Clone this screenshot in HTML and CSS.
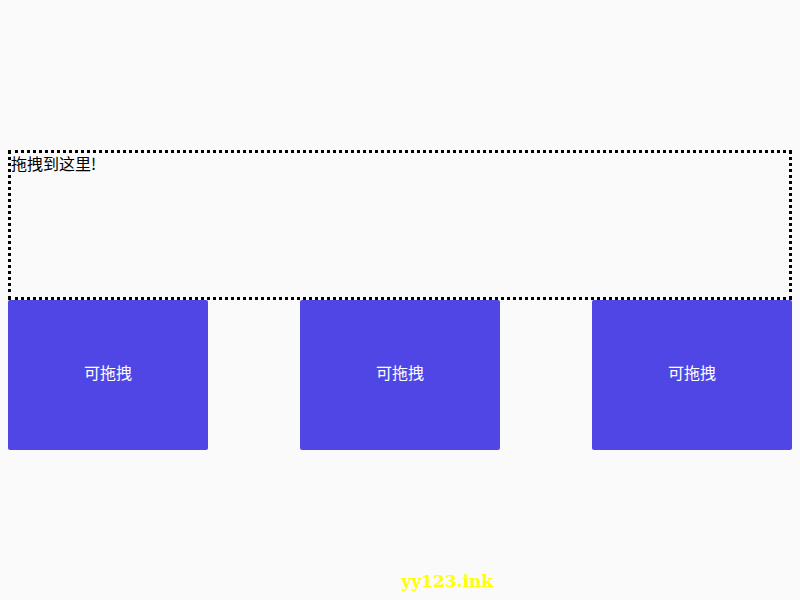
FILE: index.html
```html
<!DOCTYPE html>
<html>
<head>
<meta charset="utf-8">
<link rel="stylesheet" href="styles.css">
</head>
<body>
<div class="page">
  <div class="dropzone">拖拽到这里!</div>
  <div class="items">
    <div class="item">可拖拽</div>
    <div class="item">可拖拽</div>
    <div class="item">可拖拽</div>
  </div>
</div>
<div class="watermark">yy123.ink</div>
</body>
</html>
```

FILE: styles.css
```css
html, body {
  background: #fafafa;
}
body {
  margin: 8px;
  font-family: "Noto Sans CJK SC", "Liberation Sans", sans-serif;
  font-size: 16px;
  color: #000;
}
.page {
  padding-top: 142px;
}
.dropzone {
  height: 144px;
  border: 3px dotted #000;
  line-height: 20px;
}
.items {
  display: flex;
  justify-content: space-between;
}
.item {
  box-sizing: border-box;
  width: 200px;
  height: 150px;
  padding-bottom: 6px;
  background: #4f46e5;
  color: #fff;
  border-radius: 2px;
  display: flex;
  align-items: center;
  justify-content: center;
}
.watermark {
  position: fixed;
  left: 0;
  right: 0;
  bottom: 9px;
  text-align: center;
  padding-left: 94px;
  font-family: "DejaVu Serif", serif;
  font-weight: bold;
  font-size: 17px;
  color: #ffff00;
}
```
